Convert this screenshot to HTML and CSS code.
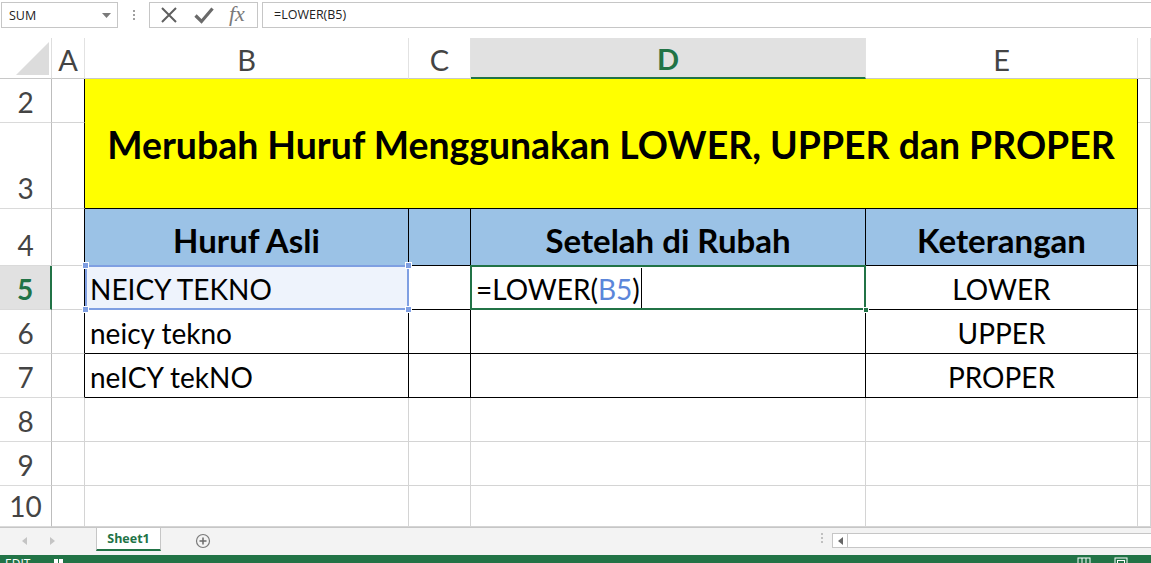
FILE: index.html
```html
<!DOCTYPE html>
<html lang="id">
<head>
    <meta charset="UTF-8">
    <meta name="viewport" content="width=device-width, initial-scale=1.0">
    <title>Merubah Huruf - Excel</title>
    <link rel="stylesheet" href="styles.css">
</head>
<body>
    <div class="formula-bar">
        <div class="name-box">
            <span>SUM</span>
            <svg class="caret-down" width="9" height="5" viewBox="0 0 9 5"><polygon points="0,0 9,0 4.5,5" fill="#7a7a7a"/></svg>
        </div>
        <div class="grip"><i></i><i></i><i></i></div>
        <div class="fx-buttons">
            <svg width="16" height="16" viewBox="0 0 16 16"><path d="M1 1 L15 15 M15 1 L1 15" stroke="#5f5f5f" stroke-width="2" fill="none"/></svg>
            <svg width="20" height="17" viewBox="0 0 20 17"><path d="M1.5 8.5 L7.5 14.5 L18.5 1.5" stroke="#6a6a6a" stroke-width="3.2" fill="none"/></svg>
            <span class="fx">fx</span>
        </div>
        <div class="formula-input">=LOWER(B5)</div>
    </div>

    <div class="sheet">
        <!-- column headers -->
        <div class="corner"><svg width="52" height="40" viewBox="0 0 52 40"><polygon points="49,4 49,37 16,37" fill="#dcdcdc"/></svg></div>
        <div class="ch">A</div>
        <div class="ch">B</div>
        <div class="ch">C</div>
        <div class="ch ch-on">D</div>
        <div class="ch">E</div>
        <div class="ch"></div>

        <!-- row 2 / 3 : judul -->
        <div class="rh">2</div>
        <div class="c edge"></div>
        <div class="c title">Merubah Huruf Menggunakan LOWER, UPPER dan PROPER</div>
        <div class="c"></div>
        <div class="rh">3</div>
        <div class="c edge"></div>
        <div class="c"></div>

        <!-- row 4 -->
        <div class="rh">4</div>
        <div class="c edge"></div>
        <div class="c t th">Huruf Asli</div>
        <div class="c t th"></div>
        <div class="c t th">Setelah di Rubah</div>
        <div class="c t th">Keterangan</div>
        <div class="c"></div>

        <!-- row 5 -->
        <div class="rh rh-on">5</div>
        <div class="c edge"></div>
        <div class="c t sel">NEICY TEKNO<i class="hd tl"></i><i class="hd tr"></i><i class="hd bl"></i><i class="hd br"></i></div>
        <div class="c t"></div>
        <div class="c t active"><span>=LOWER(<span class="ref">B5</span>)</span><i class="cursor"></i><i class="fill"></i></div>
        <div class="c t mid">LOWER</div>
        <div class="c"></div>

        <!-- row 6 -->
        <div class="rh">6</div>
        <div class="c edge"></div>
        <div class="c t">neicy tekno</div>
        <div class="c t"></div>
        <div class="c t"></div>
        <div class="c t mid">UPPER</div>
        <div class="c"></div>

        <!-- row 7 -->
        <div class="rh">7</div>
        <div class="c edge"></div>
        <div class="c t">neICY tekNO</div>
        <div class="c t"></div>
        <div class="c t"></div>
        <div class="c t mid">PROPER</div>
        <div class="c"></div>

        <!-- rows 8 - 10 -->
        <div class="rh">8</div>
        <div class="c"></div><div class="c"></div><div class="c"></div><div class="c"></div><div class="c"></div><div class="c"></div>
        <div class="rh">9</div>
        <div class="c"></div><div class="c"></div><div class="c"></div><div class="c"></div><div class="c"></div><div class="c"></div>
        <div class="rh">10</div>
        <div class="c"></div><div class="c"></div><div class="c"></div><div class="c"></div><div class="c"></div><div class="c"></div>
    </div>

    <div class="tabs">
        <div class="tab-nav">
            <svg width="6" height="8" viewBox="0 0 6 8"><polygon points="5,0 5,8 0,4" fill="#c4c4c4"/></svg>
            <svg width="6" height="8" viewBox="0 0 6 8"><polygon points="1,0 1,8 6,4" fill="#c4c4c4"/></svg>
        </div>
        <div class="tab">Sheet1</div>
        <div class="add-sheet">
            <svg width="16" height="16" viewBox="0 0 16 16"><circle cx="8" cy="8" r="6.5" stroke="#7a7a7a" stroke-width="1.2" fill="none"/><path d="M8 4.5 V11.5 M4.5 8 H11.5" stroke="#6a6a6a" stroke-width="1.5"/></svg>
        </div>
        <div class="tab-space"></div>
        <div class="grip grip-small"><i></i><i></i><i></i></div>
        <div class="hscroll">
            <div class="hscroll-btn"><svg width="5" height="8" viewBox="0 0 5 8"><polygon points="5,0 5,8 0,4" fill="#666"/></svg></div>
        </div>
    </div>

    <div class="status">
        <span class="mode">EDIT</span>
        <svg class="rec" width="10" height="8" viewBox="0 0 10 8"><rect x="0" y="1" width="4" height="7" fill="#fff"/><rect x="5" y="1" width="4" height="7" fill="#fff"/></svg>
        <div class="status-space"></div>
        <svg class="view" width="14" height="8" viewBox="0 0 14 8"><rect x="1" y="2" width="12" height="8" stroke="#fff" fill="none"/><path d="M5 2 V8 M9 2 V8" stroke="#fff"/></svg>
        <svg class="view" width="14" height="8" viewBox="0 0 14 8"><rect x="1" y="2" width="12" height="8" stroke="#fff" fill="none"/><rect x="3.5" y="4.5" width="7" height="5" stroke="#fff" fill="none"/></svg>
    </div>
</body>
</html>
```

FILE: styles.css
```css
* {
    box-sizing: border-box;
}
body {
    margin: 0;
    width: 1151px;
    height: 563px;
    overflow: hidden;
    background-color: white;
    font-family: Lato, "Open Sans", sans-serif;
    color: black;
}

/* formula bar */
.formula-bar {
    display: flex;
    align-items: flex-start;
    height: 38px;
    padding-top: 2px;
    font-family: "Open Sans", "Noto Sans", sans-serif;
    font-size: 12.5px;
    color: #222;
}
.name-box {
    width: 117px;
    height: 26px;
    margin-left: 1px;
    border: 1px solid #c6c6c6;
    display: flex;
    align-items: center;
    justify-content: space-between;
    padding: 0 6px 0 7px;
}
.grip {
    width: 31px;
    height: 26px;
    display: flex;
    flex-direction: column;
    align-items: center;
    justify-content: center;
    gap: 2px;
}
.grip i {
    width: 2px;
    height: 2px;
    background-color: #a0a0a0;
}
.fx-buttons {
    width: 109px;
    height: 26px;
    border: 1px solid #c6c6c6;
    display: flex;
    align-items: center;
    padding-left: 11px;
    gap: 17px;
}
.fx {
    font-family: "Liberation Serif", serif;
    font-style: italic;
    font-size: 22px;
    color: #7a7a7a;
    margin-left: -2px;
    margin-top: -3px;
}
.formula-input {
    flex: 1;
    height: 26px;
    margin-left: 4px;
    border: 1px solid #c6c6c6;
    border-right: none;
    padding: 3px 0 0 11px;
}

/* grid */
.sheet {
    display: grid;
    grid-template-columns: 52px 33px 324px 62px 395px 272px 13px;
    grid-template-rows: 41px 44px 86px 57px repeat(5, 44px) 41px;
}
.corner {
    border-right: 1px solid #dedede;
    border-bottom: 1px solid #c8c8c8;
}
.corner svg {
    display: block;
}
.ch {
    display: flex;
    justify-content: center;
    align-items: flex-end;
    padding-bottom: 1px;
    font-size: 29px;
    color: #444;
    border-right: 1px solid #e2e2e2;
    border-bottom: 1px solid #c8c8c8;
}
.ch-on {
    background-color: #e1e1e1;
    color: #217346;
    font-weight: 700;
    border-bottom: 2px solid #217346;
}
.rh {
    display: flex;
    justify-content: center;
    align-items: flex-end;
    padding-bottom: 3px;
    font-size: 28px;
    color: #444;
    border-right: 1px solid #bdbdbd;
    border-bottom: 1px solid #dadada;
}
.rh-on {
    background-color: #e1e1e1;
    color: #217346;
    font-weight: 700;
    border-right: 2px solid #217346;
}
.c {
    display: flex;
    align-items: flex-end;
    padding: 0 5px 3px 5px;
    font-size: 28px;
    white-space: nowrap;
    border-right: 1px solid #d4d4d4;
    border-bottom: 1px solid #d4d4d4;
}
.edge {
    border-right-color: black;
}
.t {
    border-right-color: black;
    border-bottom-color: black;
}
.title {
    grid-column: 3 / 7;
    grid-row: 2 / 4;
    background-color: #ffff00;
    border-right-color: black;
    border-bottom-color: black;
    justify-content: center;
    align-items: center;
    padding: 2px 0 0 0;
    font-size: 37.4px;
    font-weight: 700;
}
.th {
    background-color: #9bc2e6;
    justify-content: center;
    font-size: 33px;
    font-weight: 700;
    padding-bottom: 5px;
}
.mid {
    justify-content: center;
}

/* selection */
.sel {
    position: relative;
    background-color: #eef3fc;
}
.sel::before {
    content: '';
    position: absolute;
    left: 0;
    top: -1px;
    right: -1px;
    bottom: -1px;
    border: 2px solid #7f9fe2;
}
.hd {
    position: absolute;
    width: 7px;
    height: 7px;
    background-color: #7f9fe2;
    border: 1px solid white;
}
.tl { left: -3px; top: -4px; }
.tr { right: -4px; top: -4px; }
.bl { left: -3px; bottom: -4px; }
.br { right: -4px; bottom: -4px; }

.active {
    position: relative;
}
.active::before {
    content: '';
    position: absolute;
    left: -1px;
    top: -1px;
    right: -1px;
    bottom: -1px;
    border: 2px solid #217346;
}
.ref {
    color: #5b86da;
}
.cursor {
    align-self: stretch;
    width: 1px;
    margin: 2px 0 -3px 1px;
    background-color: black;
}
.fill {
    position: absolute;
    right: -4px;
    bottom: -4px;
    width: 6px;
    height: 6px;
    background-color: #217346;
    border: 1px solid white;
}

/* sheet tabs */
.tabs {
    height: 28px;
    display: flex;
    align-items: flex-start;
    background-color: #f3f3f3;
    border-top: 1px solid #c6c6c6;
}
.tab-nav {
    width: 96px;
    height: 26px;
    display: flex;
    align-items: center;
    padding-left: 22px;
    gap: 21px;
}
.tab {
    width: 65px;
    height: 24px;
    margin-top: -1px;
    background-color: white;
    border: 1px solid #c6c6c6;
    border-bottom: 2px solid #217346;
    display: flex;
    align-items: center;
    justify-content: center;
    font-family: "Open Sans", sans-serif;
    font-size: 12.5px;
    font-weight: 700;
    color: #217346;
}
.add-sheet {
    margin: 5px 0 0 34px;
}
.add-sheet svg {
    display: block;
}
.tab-space {
    flex: 1;
}
.grip-small {
    width: 12px;
    height: 20px;
    margin-right: 4px;
}
.grip-small i {
    background-color: #c0c0c0;
}
.hscroll {
    width: 319px;
    height: 15px;
    margin-top: 5px;
    background-color: white;
    border: 1px solid #c6c6c6;
    border-right: none;
}
.hscroll-btn {
    width: 15px;
    height: 13px;
    border-right: 1px solid #c6c6c6;
    display: flex;
    align-items: center;
    justify-content: center;
}

/* status bar */
.status {
    height: 8px;
    overflow: hidden;
    background-color: #217346;
    display: flex;
    align-items: flex-start;
    color: white;
    font-family: "Open Sans", sans-serif;
    font-size: 12px;
}
.mode {
    margin: 1px 0 0 5px;
    line-height: 16px;
}
.rec {
    margin: 3px 0 0 24px;
}
.status-space {
    flex: 1;
}
.view {
    margin-top: 1px;
    margin-right: 23px;
}
```
